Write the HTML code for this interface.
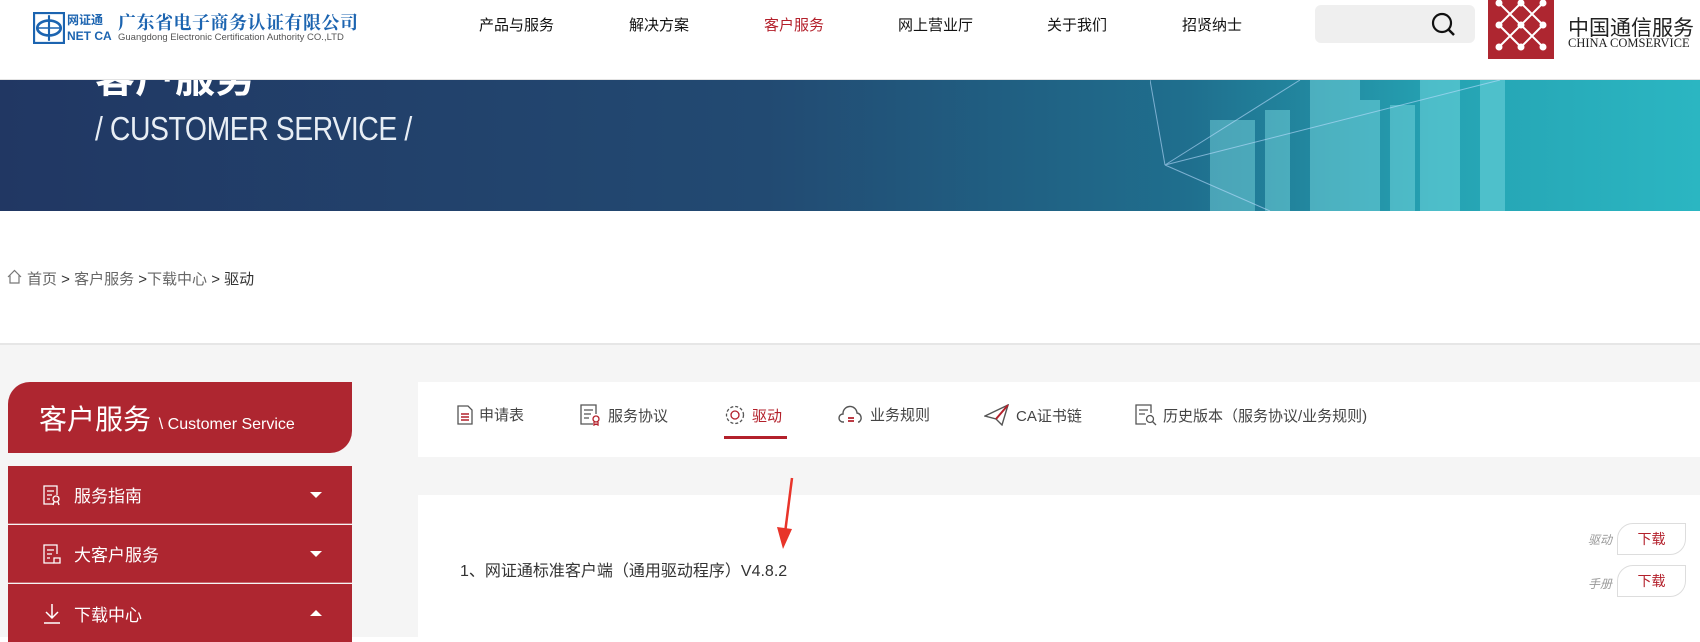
<!DOCTYPE html>
<html><head><meta charset="utf-8"><style>
*{margin:0;padding:0;box-sizing:border-box}
body{width:1700px;height:637px;overflow:hidden;position:relative;background:#fff;font-family:"Liberation Sans","Noto Sans CJK SC",sans-serif;color:#333}
.abs{position:absolute}
.nav{top:14px;font-size:15px;color:#111}
#banner{top:80px;left:0;width:1700px;height:131px;overflow:hidden;background:linear-gradient(90deg,#213763 0%,#224a72 45%,#1f6f8e 70%,#25a3b3 85%,#2bb6c2 100%)}
.tab{top:404px;font-size:15px;color:#444;display:flex;align-items:center;gap:6px}
.mi{left:8px;width:344px;height:58px;background:#ae2630;color:#fff;font-size:17px;display:flex;align-items:center;border-bottom:1px solid #c8676e}
.mi svg{margin-left:34px;margin-right:12px}
.mi .ar{position:absolute;right:30px;width:0;height:0;border-left:6px solid transparent;border-right:6px solid transparent}
.btn{width:69px;height:32px;border:1px solid #ddd;border-radius:16px 0 16px 0;background:#fff;color:#b3202b;font-size:14px;text-align:center;line-height:30px}
.lbl{font-size:12px;color:#999;font-style:italic}
</style></head><body>
<div class="abs" style="left:0;top:0;width:1700px;height:80px;border-bottom:1px solid #e3e3e3;background:#fff"></div>
<svg class="abs" style="left:33px;top:12px" width="32" height="32" viewBox="0 0 30 30"><rect x="1" y="1" width="28" height="28" fill="none" stroke="#1c64b0" stroke-width="2"/><ellipse cx="15" cy="15" rx="11" ry="7" fill="none" stroke="#1c64b0" stroke-width="2.5"/><line x1="15" y1="3" x2="15" y2="27" stroke="#1c64b0" stroke-width="2"/><line x1="4" y1="15" x2="26" y2="15" stroke="#1c64b0" stroke-width="1.5"/></svg>
<div class="abs" style="left:67px;top:12px;font-size:12px;font-weight:bold;color:#1c64b0;line-height:16px">网证通<br>NET CA</div>
<div class="abs" style="left:118px;top:9px;font-size:18px;font-weight:bold;color:#1c64b0;font-family:'Noto Serif CJK SC',serif;letter-spacing:0.5px">广东省电子商务认证有限公司</div>
<div class="abs" style="left:118px;top:32px;font-size:9.5px;color:#555">Guangdong Electronic Certification Authority CO.,LTD</div>
<div class="abs nav" style="left:479px">产品与服务</div>
<div class="abs nav" style="left:629px">解决方案</div>
<div class="abs nav" style="left:764px;color:#b3202b">客户服务</div>
<div class="abs nav" style="left:898px">网上营业厅</div>
<div class="abs nav" style="left:1047px">关于我们</div>
<div class="abs nav" style="left:1182px">招贤纳士</div>
<div class="abs" style="left:1315px;top:5px;width:160px;height:38px;background:#efefef;border-radius:6px"></div>
<svg class="abs" style="left:1431px;top:12px" width="26" height="26" viewBox="0 0 26 26"><circle cx="11" cy="11" r="9" fill="none" stroke="#111" stroke-width="2.2"/><line x1="17.5" y1="17.5" x2="23" y2="23" stroke="#111" stroke-width="2.5"/></svg>
<svg class="abs" style="left:1488px;top:0" width="66" height="59" viewBox="0 0 66 59"><rect width="66" height="59" fill="#ae2630"/><g stroke="#fff" stroke-width="2" fill="none"><path d="M11 3 L55 47 M33 3 L55 25 M11 25 L33 47 M55 3 L11 47 M33 3 L11 25 M55 25 L33 47"/></g><g fill="#fff"><circle cx="11" cy="3" r="3.5"/><circle cx="33" cy="3" r="3.5"/><circle cx="55" cy="3" r="3.5"/><circle cx="11" cy="25" r="3.5"/><circle cx="33" cy="25" r="3.5"/><circle cx="55" cy="25" r="3.5"/><circle cx="11" cy="47" r="3.5"/><circle cx="33" cy="47" r="3.5"/><circle cx="55" cy="47" r="3.5"/></g></svg>
<div class="abs" style="left:1568px;top:12px;font-size:21px;color:#222;white-space:nowrap">中国通信服务</div>
<div class="abs" style="left:1568px;top:36px;font-size:12.5px;color:#222;font-family:'Liberation Serif',serif;white-space:nowrap">CHINA COMSERVICE</div>
<div id="banner" class="abs">
<div class="abs" style="left:95px;top:-34px;font-size:40px;color:#fff;font-weight:bold">客户服务</div>
<div class="abs" style="left:95px;top:30px;font-size:33px;color:#e8eef5;transform:scaleX(0.86);transform-origin:left;letter-spacing:-0.5px">/ CUSTOMER SERVICE /</div>
<svg class="abs" style="left:1150px;top:0" width="550" height="131"><g fill="#7fe0e6" opacity="0.45"><rect x="60" y="40" width="45" height="91"/><rect x="115" y="30" width="25" height="101"/><rect x="160" y="0" width="50" height="131"/><rect x="200" y="20" width="30" height="111"/><rect x="240" y="25" width="25" height="106"/><rect x="270" y="0" width="40" height="131"/><rect x="280" y="60" width="25" height="71"/><rect x="330" y="0" width="25" height="131"/></g><g stroke="#bdf" stroke-width="1" opacity="0.6"><line x1="15" y1="85" x2="150" y2="0"/><line x1="15" y1="85" x2="0" y2="0"/><line x1="15" y1="85" x2="350" y2="0"/><line x1="15" y1="85" x2="120" y2="131"/></g></svg>
</div>
<svg class="abs" style="left:7px;top:269px" width="15" height="15" viewBox="0 0 15 15"><path d="M1 8 L7.5 1.5 L14 8 M3 6.5 V14 H12 V6.5" fill="none" stroke="#777" stroke-width="1.2"/></svg>
<div class="abs" style="left:27px;top:268px;font-size:15px;color:#666">首页 <span style="color:#333">&gt;</span> 客户服务 <span style="color:#333">&gt;</span>下载中心 <span style="color:#333">&gt;</span> <span style="color:#333">驱动</span></div>
<div class="abs" style="left:0;top:343px;width:1700px;height:294px;background:#f5f5f5;border-top:2px solid #e6e6e6"></div>
<div class="abs" style="left:8px;top:382px;width:344px;height:71px;background:#ae2630;border-radius:22px 0 22px 0"></div>
<div class="abs" style="left:39px;top:398px;color:#fff;font-size:28px;white-space:nowrap">客户服务 <span style="font-size:16px">\ Customer Service</span></div>
<div class="abs mi" style="top:466px"><svg width="20" height="22" viewBox="0 0 20 22" fill="none" stroke="#fff" stroke-width="1.3"><path d="M12 20H2V2h13v9"/><path d="M5 7h7M5 11h5M5 15h3"/><circle cx="14" cy="15" r="3"/><path d="M12 18l-1 3M16 18l1 3"/></svg>服务指南<span class="ar" style="border-top:6px solid #fff"></span></div>
<div class="abs mi" style="top:525px"><svg width="20" height="22" viewBox="0 0 20 22" fill="none" stroke="#fff" stroke-width="1.3"><path d="M12 20H2V2h13v9"/><path d="M5 7h7M5 11h5M5 15h3"/><path d="M12 15h6v5h-6z"/></svg>大客户服务<span class="ar" style="border-top:6px solid #fff"></span></div>
<div class="abs mi" style="top:584px;border:none"><svg width="20" height="22" viewBox="0 0 20 22" fill="none" stroke="#fff" stroke-width="1.5"><path d="M10 2v14M4 10l6 6 6-6M2 21h16"/></svg>下载中心<span class="ar" style="border-bottom:6px solid #fff"></span></div>
<div class="abs" style="left:418px;top:382px;width:1282px;height:75px;background:#fff"></div>
<div class="abs tab" style="left:457px"><svg width="16" height="20" viewBox="0 0 16 20" fill="none" stroke="#555" stroke-width="1.3"><path d="M1 1h10l4 4v14H1z"/><path d="M4 9h8M4 12h8M4 15h8" stroke="#b3202b" stroke-width="1.6"/></svg>申请表</div>
<div class="abs tab" style="left:580px"><svg width="22" height="22" viewBox="0 0 22 22" fill="none" stroke="#555" stroke-width="1.3"><path d="M13 20H1V1h15v9"/><path d="M4 6h9M4 10h7M4 14h5"/><circle cx="16" cy="15" r="3" stroke="#b3202b"/><path d="M14 18v3l2-1 2 1v-3" stroke="#b3202b"/></svg>服务协议</div>
<div class="abs tab" style="left:724px;color:#b3202b"><svg width="22" height="22" viewBox="0 0 22 22" fill="none" stroke="#555" stroke-width="1.3"><circle cx="11" cy="11" r="8.5" stroke-dasharray="3 2"/><circle cx="11" cy="11" r="4" stroke="#b3202b"/></svg>驱动</div>
<div class="abs" style="left:724px;top:436px;width:63px;height:3px;background:#b3202b"></div>
<div class="abs tab" style="left:838px"><svg width="26" height="20" viewBox="0 0 26 20" fill="none" stroke="#555" stroke-width="1.4"><path d="M6 17H5a4 4 0 0 1 0-8 7 7 0 0 1 14-1 5 5 0 0 1 2 9h-1"/><path d="M10 13h6M10 16h6" stroke="#b3202b" stroke-width="1.8"/></svg>业务规则</div>
<div class="abs tab" style="left:984px"><svg width="26" height="22" viewBox="0 0 26 22" fill="none" stroke="#555" stroke-width="1.4"><path d="M1 12L24 1 18 21 12 15z"/><path d="M24 1L12 15" stroke="#b3202b" stroke-width="2"/></svg>CA证书链</div>
<div class="abs tab" style="left:1135px"><svg width="22" height="22" viewBox="0 0 22 22" fill="none" stroke="#555" stroke-width="1.3"><path d="M11 20H1V1h15v8"/><path d="M4 6h9M4 10h6"/><circle cx="15" cy="15" r="3.5"/><path d="M17.5 17.5L21 21"/></svg>历史版本（服务协议/业务规则)</div>
<div class="abs" style="left:418px;top:495px;width:1282px;height:142px;background:#fff"></div>
<div class="abs" style="left:460px;top:557px;font-size:16px;color:#333">1、网证通标准客户端（通用驱动程序）V4.8.2</div>
<div class="abs lbl" style="left:1588px;top:531px">驱动</div>
<div class="abs btn" style="left:1617px;top:523px">下载</div>
<div class="abs lbl" style="left:1588px;top:575px">手册</div>
<div class="abs btn" style="left:1617px;top:565px">下载</div>
<svg class="abs" style="left:770px;top:475px" width="30" height="78"><line x1="22" y1="3" x2="15" y2="58" stroke="#e8342a" stroke-width="2.5"/><path d="M7 52 L13 74 L22 54 Z" fill="#e8342a"/></svg>
</body></html>
